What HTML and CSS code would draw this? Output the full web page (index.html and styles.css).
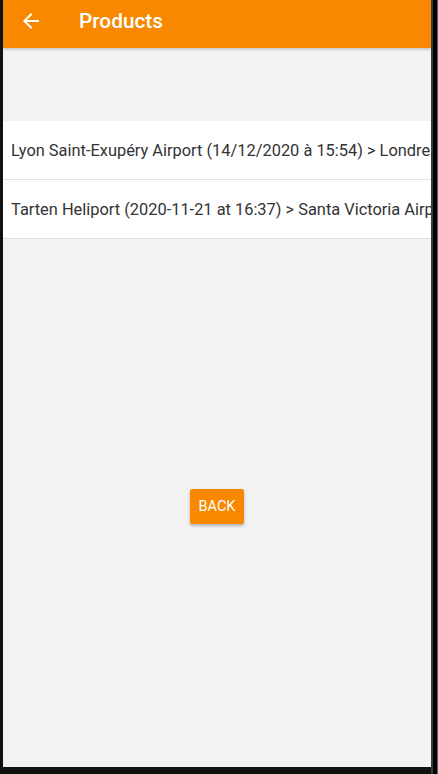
FILE: index.html
```html
<!DOCTYPE html>
<html lang="fr">
<head>
<meta charset="utf-8">
<title>Products</title>
<link rel="stylesheet" href="styles.css">
</head>
<body>
<div class="device">
  <div class="screen">
    <header class="toolbar">
      <button class="back-icon" aria-label="Back">
        <svg width="24" height="24" viewBox="0 0 24 24"><path d="M20 11H7.83l5.59-5.59L12 4l-8 8 8 8 1.41-1.41L7.83 13H20v-2z" fill="#fff"/></svg>
      </button>
      <h1 class="title">Products</h1>
    </header>
    <main class="content">
      <ul class="list">
        <li class="item">Lyon Saint-Exupéry Airport (14/12/2020 à 15:54) &gt; Londres Heathrow Airport</li>
        <li class="item">Tarten Heliport (2020-11-21 at 16:37) &gt; Santa Victoria Airport</li>
      </ul>
      <div class="actions">
        <button class="btn">BACK</button>
      </div>
    </main>
  </div>
</div>
</body>
</html>
```
FILE: styles.css
```css
html, body {
  margin: 0;
  padding: 0;
  height: 100%;
}
body {
  background: #0c0c0c;
  font-family: Roboto, "Noto Sans", "Liberation Sans", sans-serif;
}
.device {
  height: 774px;
  padding: 0 7px 7px 3px;
  box-sizing: border-box;
  background: linear-gradient(to right, #111 0, #111 431px, #3a3a3a 431px, #3a3a3a 433px, #050505 433px, #050505 437px, #5a5a5a 437px);
}
.screen {
  height: 100%;
  background: #f2f2f2;
  display: flex;
  flex-direction: column;
  overflow: hidden;
}
.toolbar {
  height: 48px;
  flex: none;
  background: #f78800;
  display: flex;
  align-items: center;
  box-shadow: 0 1px 3px rgba(0,0,0,0.25);
  position: relative;
  z-index: 1;
}
.back-icon {
  background: none;
  border: 0;
  padding: 0;
  margin: 0 0 6px 16px;
  width: 24px;
  height: 24px;
  display: flex;
  align-items: center;
  justify-content: center;
}
.title {
  margin: 0 0 6px 36px;
  font-size: 20.8px;
  font-weight: 500;
  color: #fff;
}
.content {
  flex: 1;
  display: flex;
  flex-direction: column;
  padding-top: 73px;
}
.list {
  list-style: none;
  margin: 0;
  padding: 0;
  background: #fff;
}
.item {
  height: 58px;
  line-height: 60px;
  padding-left: 8px;
  font-size: 16.4px;
  color: #333;
  white-space: nowrap;
  overflow: hidden;
  border-bottom: 1px solid #e2e2e2;
}
.actions {
  flex: 1;
  display: flex;
  align-items: center;
  justify-content: center;
  padding-top: 6px;
}
.btn {
  background: #f78800;
  color: #fff;
  border: 0;
  border-radius: 2px;
  width: 54px;
  height: 35px;
  padding: 0;
  font-family: Roboto, "Noto Sans", "Liberation Sans", sans-serif;
  font-size: 14.5px;
  box-shadow: 0 2px 3px rgba(0,0,0,0.25);
}
```
